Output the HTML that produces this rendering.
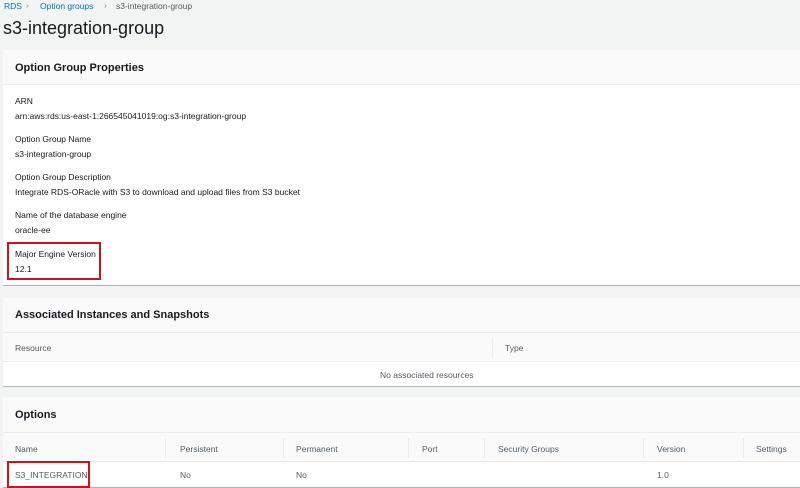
<!DOCTYPE html><html><head><style>
*{margin:0;padding:0;box-sizing:border-box}
body{width:800px;height:488px;background:#f2f3f3;font-family:"Liberation Sans",sans-serif;color:#16191f;position:relative;overflow:hidden;font-size:8.5px}
.a{position:absolute;white-space:nowrap}
.p{position:absolute;left:3px;width:797px;background:#fff;border-bottom:1px solid #aab7b8}
.h{position:absolute;left:0;width:100%;background:#fafafa;border-bottom:1px solid #eaeded}
.t{font-weight:bold;font-size:11px}
.th{color:#545b64}
.r{position:absolute;border:2px solid #d0101c}
.sep{position:absolute;width:1px;background:#eaeded}
</style></head><body>
<div class="a" style="left:4px;top:1px;color:#0073bb">RDS</div>
<div class="a" style="left:26px;top:0px;color:#879596">›</div>
<div class="a" style="left:40px;top:1px;color:#0073bb">Option groups</div>
<div class="a" style="left:104px;top:0px;color:#879596">›</div>
<div class="a" style="left:116px;top:1px;color:#545b64">s3-integration-group</div>
<div class="a" style="left:3px;top:18px;font-size:18px">s3-integration-group</div>

<div class="p" style="top:50px;height:236px">
<div class="h" style="top:0;height:35px"></div>
</div>
<div class="a t" style="left:15px;top:62px">Option Group Properties</div>
<div class="a" style="left:15px;top:96px">ARN</div>
<div class="a" style="left:15px;top:111px">arn:aws:rds:us-east-1:266545041019:og:s3-integration-group</div>
<div class="a" style="left:15px;top:134px">Option Group Name</div>
<div class="a" style="left:15px;top:149px">s3-integration-group</div>
<div class="a" style="left:15px;top:172px">Option Group Description</div>
<div class="a" style="left:15px;top:187px">Integrate RDS-ORacle with S3 to download and upload files from S3 bucket</div>
<div class="a" style="left:15px;top:210px">Name of the database engine</div>
<div class="a" style="left:15px;top:225px">oracle-ee</div>
<div class="a" style="left:15px;top:249px">Major Engine Version</div>
<div class="a" style="left:15px;top:264px">12.1</div>
<div class="r" style="left:7px;top:242px;width:94px;height:38px"></div>

<div class="p" style="top:298px;height:89px">
<div class="h" style="top:0;height:35px"></div>
<div class="h" style="top:35px;height:29px"></div>
</div>
<div class="a t" style="left:15px;top:309px">Associated Instances and Snapshots</div>
<div class="sep" style="left:492px;top:338px;height:20px"></div>
<div class="a th" style="left:15px;top:343px">Resource</div>
<div class="a th" style="left:505px;top:343px">Type</div>
<div class="a th" style="left:380px;top:370px">No associated resources</div>

<div class="p" style="top:397px;height:91px">
<div class="h" style="top:0;height:36px"></div>
<div class="h" style="top:36px;height:29px"></div>
</div>
<div class="a t" style="left:15px;top:409px">Options</div>
<div class="sep" style="left:165px;top:438px;height:20px"></div>
<div class="sep" style="left:283px;top:438px;height:20px"></div>
<div class="sep" style="left:408px;top:438px;height:20px"></div>
<div class="sep" style="left:484px;top:438px;height:20px"></div>
<div class="sep" style="left:643px;top:438px;height:20px"></div>
<div class="sep" style="left:743px;top:438px;height:20px"></div>
<div class="a th" style="left:15px;top:444px">Name</div>
<div class="a th" style="left:180px;top:444px">Persistent</div>
<div class="a th" style="left:296px;top:444px">Permanent</div>
<div class="a th" style="left:422px;top:444px">Port</div>
<div class="a th" style="left:498px;top:444px">Security Groups</div>
<div class="a th" style="left:657px;top:444px">Version</div>
<div class="a th" style="left:756px;top:444px">Settings</div>
<div class="a th" style="left:15px;top:470px">S3_INTEGRATION</div>
<div class="a th" style="left:180px;top:470px">No</div>
<div class="a th" style="left:296px;top:470px">No</div>
<div class="a th" style="left:657px;top:470px">1.0</div>
<div class="r" style="left:7px;top:461px;width:83px;height:27px"></div>
</body></html>
